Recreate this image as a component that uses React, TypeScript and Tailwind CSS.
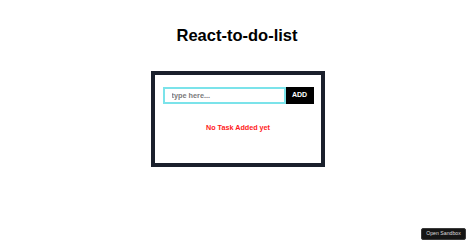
import React from "react";

export default function App() {
  return (
    <div
      className="relative w-[474px] h-[248px] bg-white overflow-hidden flex flex-col items-center"
      style={{ fontFamily: '"Liberation Sans", Arial, sans-serif' }}
    >
      <h1 className="mt-[26px] text-[16.5px] leading-[19px] font-bold text-black">
        React-to-do-list
      </h1>
      <div className="mt-[26px] ml-[2px] w-[174px] h-[96px] border-4 border-[#1a202c] flex flex-col items-center pt-[12px]">
        <div className="flex">
          <input
            type="text"
            placeholder="type here..."
            className="w-[123px] h-[17px] border-2 border-solid border-[#7be3ea] bg-white pl-[7px] text-[7.3px] font-bold text-[#333] placeholder:text-[#7a7a7a] outline-none"
          />
          <button className="w-[28px] h-[17px] bg-black text-white text-[7px] font-bold flex items-center justify-center">
            ADD
          </button>
        </div>
        <p className="mt-[20px] text-[7.2px] leading-[8px] font-bold text-[#ff1a1a]">
          No Task Added yet
        </p>
      </div>
      <button className="absolute right-[8px] bottom-[8px] w-[45px] h-[12px] bg-[#151515] border border-[#3a3a3a] rounded-[2px] text-[5.2px] text-[#dddddd] flex items-center justify-center">
        Open Sandbox
      </button>
    </div>
  );
}
